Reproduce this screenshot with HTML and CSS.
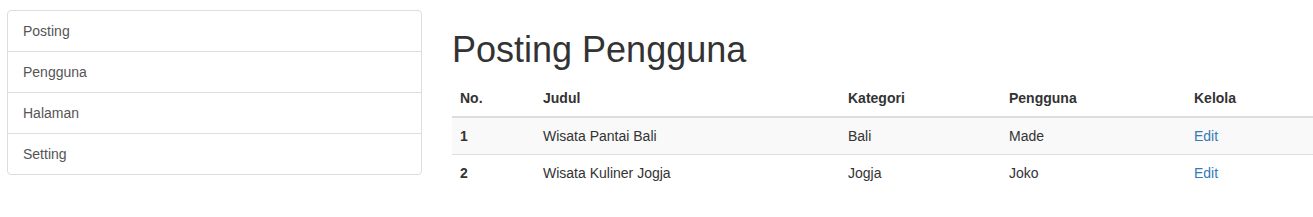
FILE: index.html
```html
<!DOCTYPE html>
<html>
<head>
<meta charset="utf-8">
<link rel="stylesheet" href="styles.css">
</head>
<body>
<div class="page">
  <aside class="sidebar">
    <ul class="list-group">
      <li class="list-item">Posting</li>
      <li class="list-item">Pengguna</li>
      <li class="list-item">Halaman</li>
      <li class="list-item">Setting</li>
    </ul>
  </aside>
  <main class="content">
    <h1 class="title">Posting Pengguna</h1>
    <table class="table">
      <colgroup>
        <col class="c-no"><col class="c-judul"><col class="c-kat"><col class="c-user"><col class="c-kelola">
      </colgroup>
      <thead>
        <tr><th>No.</th><th>Judul</th><th>Kategori</th><th>Pengguna</th><th>Kelola</th></tr>
      </thead>
      <tbody>
        <tr class="odd"><th>1</th><td>Wisata Pantai Bali</td><td>Bali</td><td>Made</td><td><a class="link" href="#">Edit</a></td></tr>
        <tr><th>2</th><td>Wisata Kuliner Jogja</td><td>Jogja</td><td>Joko</td><td><a class="link" href="#">Edit</a></td></tr>
      </tbody>
    </table>
  </main>
</div>
</body>
</html>
```
FILE: styles.css
```css
* { box-sizing: border-box; }
html, body { margin: 0; padding: 0; background: #fff; }
body {
  font-family: "Liberation Sans", Arial, Helvetica, sans-serif;
  font-size: 14px;
  line-height: 20px;
  color: #333;
}
.page {
  display: flex;
  align-items: flex-start;
  padding-top: 10px;
}
.sidebar {
  width: 415px;
  margin-left: 7px;
  flex: none;
}
.list-group {
  list-style: none;
  margin: 0;
  padding: 0;
}
.list-item {
  padding: 10px 15px;
  border: 1px solid #ddd;
  margin-bottom: -1px;
  color: #555;
  background: #fff;
}
.list-item:first-child { border-radius: 4px 4px 0 0; }
.list-item:last-child { border-radius: 0 0 4px 4px; margin-bottom: 0; }
.content {
  flex: 1;
  margin-left: 30px;
  min-width: 0;
}
.title {
  font-size: 36px;
  font-weight: 500;
  line-height: 39.6px;
  margin: 20px 0 10px;
  color: #333;
}
.table {
  width: 100%;
  border-collapse: collapse;
  border-spacing: 0;
  table-layout: fixed;
}
.c-no { width: 83px; }
.c-judul { width: 305px; }
.c-kat { width: 161px; }
.c-user { width: 185px; }
.c-kelola { width: auto; }
.table th, .table td {
  padding: 8px;
  line-height: 20px;
  text-align: left;
  vertical-align: top;
}
.table thead th {
  font-weight: bold;
  border-bottom: 2px solid #ddd;
}
.table tbody th { font-weight: bold; }
.table tbody tr + tr th, .table tbody tr + tr td { border-top: 1px solid #ddd; }
.table tbody tr.odd { background: #f9f9f9; }
.link { color: #337ab7; text-decoration: none; }
```
